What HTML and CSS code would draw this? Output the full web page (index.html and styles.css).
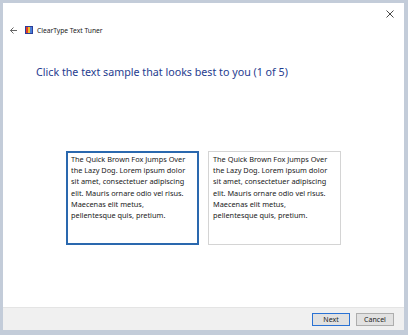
FILE: index.html
```html
<!DOCTYPE html>
<html>
<head>
<meta charset="utf-8">
<link rel="stylesheet" href="styles.css">
</head>
<body>
<div class="window">
  <div class="titlebar">
    <svg class="close" width="8" height="8" viewBox="0 0 8 8"><path d="M0.5 0.5 L7.5 7.5 M7.5 0.5 L0.5 7.5" stroke="#333" stroke-width="0.9"/></svg>
  </div>
  <div class="nav">
    <svg class="back" width="7" height="7" viewBox="0 0 7 7"><path d="M0.5 3.5 H7 M3.5 0.5 L0.5 3.5 L3.5 6.5" stroke="#555" stroke-width="0.9" fill="none"/></svg>
    <svg class="appicon" width="8" height="8" viewBox="0 0 8 8">
      <rect x="0" y="0" width="8" height="8" fill="#2b3f9a"/>
      <rect x="1" y="1" width="2" height="6" fill="#e23a2c"/>
      <rect x="3" y="1" width="2" height="6" fill="#f2c12e"/>
      <rect x="5" y="1" width="2" height="6" fill="#4a7fd8"/>
    </svg>
    <span class="apptitle">ClearType Text Tuner</span>
  </div>
  <h1 class="heading">Click the text sample that looks best to you (1 of 5)</h1>
  <div class="samples">
    <div class="sample selected">The Quick Brown Fox Jumps Over<br>the Lazy Dog. Lorem ipsum dolor<br>sit amet, consectetuer adipiscing<br>elit. Mauris ornare odio vel risus.<br>Maecenas elit metus,<br>pellentesque quis, pretium.</div>
    <div class="sample">The Quick Brown Fox Jumps Over<br>the Lazy Dog. Lorem ipsum dolor<br>sit amet, consectetuer adipiscing<br>elit. Mauris ornare odio vel risus.<br>Maecenas elit metus,<br>pellentesque quis, pretium.</div>
  </div>
  <div class="spacer"></div>
  <div class="footer">
    <button class="btn primary">Next</button>
    <button class="btn">Cancel</button>
  </div>
</div>
</body>
</html>
```

FILE: styles.css
```css
html, body {
  margin: 0;
  padding: 0;
}
body {
  width: 408px;
  height: 335px;
  background: #c3ccd9;
  font-family: "Noto Sans", "Open Sans", sans-serif;
  overflow: hidden;
}
.window {
  margin: 3px 4px 0 3px;
  height: 327px;
  background: #ffffff;
  display: flex;
  flex-direction: column;
}
.titlebar {
  height: 18px;
  display: flex;
  justify-content: flex-end;
  align-items: flex-start;
}
.close {
  margin: 7px 10px 0 0;
}
.nav {
  display: flex;
  align-items: center;
  height: 14px;
  margin-top: 2px;
  padding-left: 7px;
}
.back {
  margin-right: 8px;
}
.appicon {
  margin-right: 4px;
}
.apptitle {
  font-size: 6.7px;
  color: #222;
}
.heading {
  margin: 27px 0 0 33px;
  font-size: 10.7px;
  font-weight: normal;
  color: #1f3c8f;
  line-height: 16px;
}
.samples {
  display: flex;
  gap: 9px;
  margin: 71px 0 0 63px;
}
.sample {
  box-sizing: border-box;
  width: 133px;
  height: 94px;
  border: 1px solid #d4d4d4;
  padding: 2px 4px 0 4px;
  font-family: "Noto Sans", sans-serif;
  font-size: 7.35px;
  line-height: 11.2px;
  white-space: nowrap;
  color: #1a1a1a;
}
.sample.selected {
  border: 2px solid #2a68ae;
  padding: 1px 3px 0 3px;
}
.spacer {
  flex: 1;
}
.footer {
  height: 22px;
  background: #f0f0f0;
  border-top: 1px solid #e4e4e4;
  display: flex;
  justify-content: flex-end;
  align-items: center;
  gap: 6px;
  padding-right: 10px;
}
.btn {
  box-sizing: border-box;
  width: 38px;
  height: 13px;
  padding: 0;
  font-family: "Noto Sans", sans-serif;
  font-size: 7px;
  line-height: 11px;
  color: #222;
  background: #e1e1e1;
  border: 1px solid #adadad;
}
.btn.primary {
  border: 1px solid #2a72d4;
}
```
